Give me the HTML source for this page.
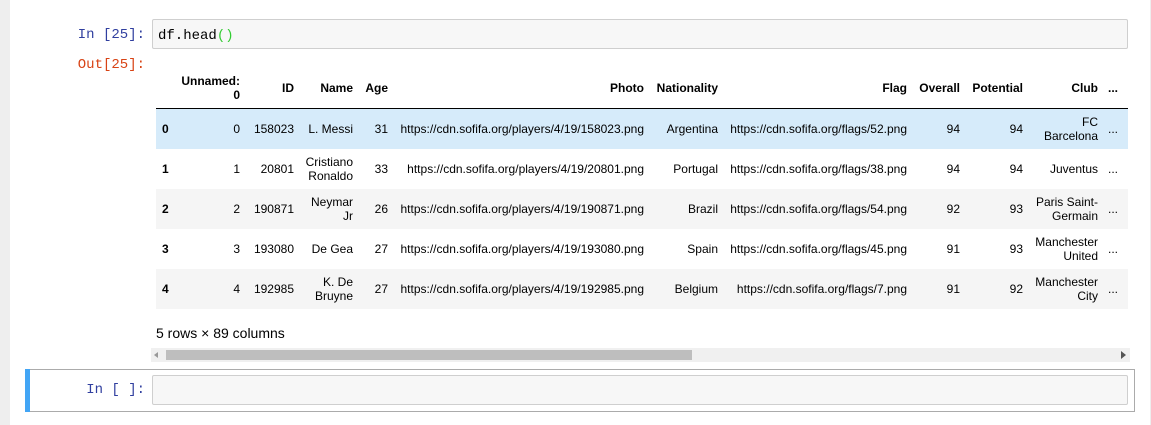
<!DOCTYPE html>
<html><head><style>
body{margin:0;width:1151px;height:425px;background:#eee;position:relative;overflow:hidden;font-family:"Liberation Sans",sans-serif;}
.nb{position:absolute;left:10px;top:0;width:1140px;height:425px;background:#fff;}
.p{position:absolute;font-family:"Liberation Mono",monospace;font-size:14px;text-align:right;width:135px;left:10px;}
.inp{position:absolute;left:152px;width:974px;height:28px;background:#f7f7f7;border:1px solid #cfcfcf;border-radius:2px;}
table{position:absolute;left:156px;top:68px;border-collapse:collapse;font-size:12px;color:#000;table-layout:fixed;width:972px;}
td,th{padding:0 5px;text-align:right;white-space:nowrap;line-height:14px;vertical-align:middle;}
th{font-weight:bold;height:40px;border-bottom:1px solid #000;}
td{height:40px;}
tr.r0{background:#d6ebfa}tr.g{background:#f5f5f5}
td:first-child{text-align:left;font-weight:bold;padding-left:6px}
</style></head><body>
<div class="nb"></div>
<div class="p" style="top:27px;color:#303f9f">In [25]:</div>
<div class="inp" style="top:19px"><span style="position:absolute;left:5px;top:8px;font-family:'Liberation Mono',monospace;font-size:14px">df.head<span style="color:#3c3">()</span></span></div>
<div class="p" style="top:57px;color:#d84315">Out[25]:</div>
<table>
<colgroup><col style="width:19px"><col style="width:70px"><col style="width:54px"><col style="width:59px"><col style="width:35px"><col style="width:256px"><col style="width:74px"><col style="width:189px"><col style="width:53px"><col style="width:63px"><col style="width:75px"><col style="width:25px"></colgroup>
<tr><th></th><th>Unnamed:<br>0</th><th>ID</th><th>Name</th><th>Age</th><th>Photo</th><th>Nationality</th><th>Flag</th><th>Overall</th><th>Potential</th><th>Club</th><th style="text-align:left">...</th></tr>
<tr class="r0"><td>0</td><td>0</td><td>158023</td><td>L. Messi</td><td>31</td><td>https://cdn.sofifa.org/players/4/19/158023.png</td><td>Argentina</td><td>https://cdn.sofifa.org/flags/52.png</td><td>94</td><td>94</td><td>FC<br>Barcelona</td><td style="text-align:left;font-weight:normal">...</td></tr>
<tr><td>1</td><td>1</td><td>20801</td><td>Cristiano<br>Ronaldo</td><td>33</td><td>https://cdn.sofifa.org/players/4/19/20801.png</td><td>Portugal</td><td>https://cdn.sofifa.org/flags/38.png</td><td>94</td><td>94</td><td>Juventus</td><td style="text-align:left;font-weight:normal">...</td></tr>
<tr class="g"><td>2</td><td>2</td><td>190871</td><td>Neymar<br>Jr</td><td>26</td><td>https://cdn.sofifa.org/players/4/19/190871.png</td><td>Brazil</td><td>https://cdn.sofifa.org/flags/54.png</td><td>92</td><td>93</td><td>Paris Saint-<br>Germain</td><td style="text-align:left;font-weight:normal">...</td></tr>
<tr><td>3</td><td>3</td><td>193080</td><td>De Gea</td><td>27</td><td>https://cdn.sofifa.org/players/4/19/193080.png</td><td>Spain</td><td>https://cdn.sofifa.org/flags/45.png</td><td>91</td><td>93</td><td>Manchester<br>United</td><td style="text-align:left;font-weight:normal">...</td></tr>
<tr class="g"><td>4</td><td>4</td><td>192985</td><td>K. De<br>Bruyne</td><td>27</td><td>https://cdn.sofifa.org/players/4/19/192985.png</td><td>Belgium</td><td>https://cdn.sofifa.org/flags/7.png</td><td>91</td><td>92</td><td>Manchester<br>City</td><td style="text-align:left;font-weight:normal">...</td></tr>
</table>
<div style="position:absolute;left:156px;top:325px;font-size:14px">5 rows × 89 columns</div>
<div style="position:absolute;left:151px;top:348px;width:979px;height:14px;background:#f0f0f0">
 <div style="position:absolute;left:3px;top:4px;width:0;height:0;border-top:3px solid transparent;border-bottom:3px solid transparent;border-right:4px solid #999"></div>
 <div style="position:absolute;left:15px;top:2px;width:526px;height:10px;background:#bebebe"></div>
 <div style="position:absolute;right:4px;top:3px;width:0;height:0;border-top:4px solid transparent;border-bottom:4px solid transparent;border-left:5px solid #555"></div>
</div>
<div style="position:absolute;left:25px;top:369px;width:1109px;height:41px;border:1px solid #ababab;border-left:none;"></div>
<div style="position:absolute;left:25px;top:369px;width:5px;height:43px;background:#42a5f5"></div>
<div class="p" style="top:382px;color:#303f9f">In [ ]:</div>
<div class="inp" style="top:375px"></div>
</body></html>
